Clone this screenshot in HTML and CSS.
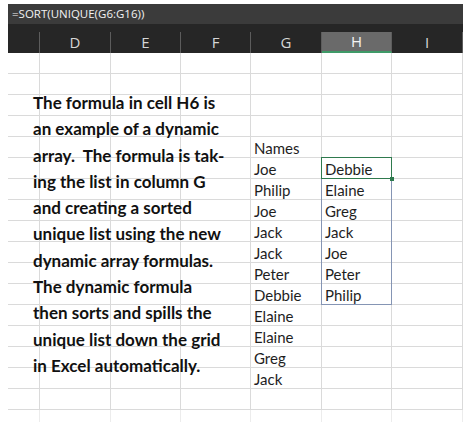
FILE: index.html
```html
<!DOCTYPE html>
<html lang="en">
<head>
<meta charset="utf-8">
<title>SORT(UNIQUE()) dynamic array</title>
<link rel="stylesheet" href="styles.css">
</head>
<body>
<div class="app">
  <div class="formula-bar">=SORT(UNIQUE(G6:G16))</div>
  <div class="col-headers">
    <div class="hcell corner"></div>
    <div class="hcell w71">D</div>
    <div class="hcell w70">E</div>
    <div class="hcell w70">F</div>
    <div class="hcell w71">G</div>
    <div class="hcell w70 selected">H</div>
    <div class="hcell w71">I</div>
  </div>
  <div class="sheet">
    <div class="row"><div class="cell rh"></div><div class="cell w71"></div><div class="cell w70"></div><div class="cell w70"></div><div class="cell w71"></div><div class="cell w70"></div><div class="cell w71"></div></div>
    <div class="row"><div class="cell rh"></div><div class="cell w71"></div><div class="cell w70"></div><div class="cell w70"></div><div class="cell w71"></div><div class="cell w70"></div><div class="cell w71"></div></div>
    <div class="row"><div class="cell rh"></div><div class="cell w71"></div><div class="cell w70"></div><div class="cell w70"></div><div class="cell w71"></div><div class="cell w70"></div><div class="cell w71"></div></div>
    <div class="row"><div class="cell rh"></div><div class="cell w71"></div><div class="cell w70"></div><div class="cell w70"></div><div class="cell w71"></div><div class="cell w70"></div><div class="cell w71"></div></div>
    <div class="row"><div class="cell rh"></div><div class="cell w71"></div><div class="cell w70"></div><div class="cell w70"></div><div class="cell w71">Names</div><div class="cell w70"></div><div class="cell w71"></div></div>
    <div class="row"><div class="cell rh"></div><div class="cell w71"></div><div class="cell w70"></div><div class="cell w70"></div><div class="cell w71">Joe</div><div class="cell w70">Debbie</div><div class="cell w71"></div></div>
    <div class="row"><div class="cell rh"></div><div class="cell w71"></div><div class="cell w70"></div><div class="cell w70"></div><div class="cell w71">Philip</div><div class="cell w70">Elaine</div><div class="cell w71"></div></div>
    <div class="row"><div class="cell rh"></div><div class="cell w71"></div><div class="cell w70"></div><div class="cell w70"></div><div class="cell w71">Joe</div><div class="cell w70">Greg</div><div class="cell w71"></div></div>
    <div class="row"><div class="cell rh"></div><div class="cell w71"></div><div class="cell w70"></div><div class="cell w70"></div><div class="cell w71">Jack</div><div class="cell w70">Jack</div><div class="cell w71"></div></div>
    <div class="row"><div class="cell rh"></div><div class="cell w71"></div><div class="cell w70"></div><div class="cell w70"></div><div class="cell w71">Jack</div><div class="cell w70">Joe</div><div class="cell w71"></div></div>
    <div class="row"><div class="cell rh"></div><div class="cell w71"></div><div class="cell w70"></div><div class="cell w70"></div><div class="cell w71">Peter</div><div class="cell w70">Peter</div><div class="cell w71"></div></div>
    <div class="row"><div class="cell rh"></div><div class="cell w71"></div><div class="cell w70"></div><div class="cell w70"></div><div class="cell w71">Debbie</div><div class="cell w70">Philip</div><div class="cell w71"></div></div>
    <div class="row"><div class="cell rh"></div><div class="cell w71"></div><div class="cell w70"></div><div class="cell w70"></div><div class="cell w71">Elaine</div><div class="cell w70"></div><div class="cell w71"></div></div>
    <div class="row"><div class="cell rh"></div><div class="cell w71"></div><div class="cell w70"></div><div class="cell w70"></div><div class="cell w71">Elaine</div><div class="cell w70"></div><div class="cell w71"></div></div>
    <div class="row"><div class="cell rh"></div><div class="cell w71"></div><div class="cell w70"></div><div class="cell w70"></div><div class="cell w71">Greg</div><div class="cell w70"></div><div class="cell w71"></div></div>
    <div class="row"><div class="cell rh"></div><div class="cell w71"></div><div class="cell w70"></div><div class="cell w70"></div><div class="cell w71">Jack</div><div class="cell w70"></div><div class="cell w71"></div></div>
    <div class="row"><div class="cell rh"></div><div class="cell w71"></div><div class="cell w70"></div><div class="cell w70"></div><div class="cell w71"></div><div class="cell w70"></div><div class="cell w71"></div></div>
    <div class="row tail"><div class="cell rh"></div><div class="cell w71"></div><div class="cell w70"></div><div class="cell w70"></div><div class="cell w71"></div><div class="cell w70"></div><div class="cell w71"></div></div>

    <!-- spilled range H6:H12 and the active cell H6 -->
    <div class="spill-range"></div>
    <div class="active-cell"><span class="fill-handle"></span></div>

    <p class="note">
      <span>The formula in cell H6 is</span>
      <span>an example of a dynamic</span>
      <span>array.&nbsp; The formula is tak-</span>
      <span>ing the list in column G</span>
      <span>and creating a sorted</span>
      <span>unique list using the new</span>
      <span>dynamic array formulas.</span>
      <span>The dynamic formula</span>
      <span>then sorts and spills the</span>
      <span>unique list down the grid</span>
      <span>in Excel automatically.</span>
    </p>
  </div>
</div>
</body>
</html>
```
FILE: styles.css
```css
* { box-sizing: border-box; }

body {
  margin: 0;
  background: #ffffff;
  font-family: "Lato", "Open Sans", sans-serif;
}

.app {
  width: 455px;
  margin: 4px 0 0 8px;
}

/* dark formula bar */
.formula-bar {
  height: 20px;
  background: #3b3b3b;
  color: #f2f2f2;
  font-family: "Open Sans", "Noto Sans", sans-serif;
  font-size: 11.5px;
  line-height: 20px;
  padding-left: 4px;
}

/* column letters */
.col-headers {
  height: 29px;
  background: #262626;
  display: flex;
  align-items: flex-end;
}

.hcell {
  height: 21px;
  border-right: 1px solid #5c5c5c;
  color: #d6d6d6;
  font-family: "Open Sans", "Noto Sans", sans-serif;
  font-size: 15px;
  line-height: 21px;
  text-align: center;
}

.hcell.corner { width: 32px; }

.hcell.selected {
  background: #6a6a6a;
  color: #f4f4f4;
  border-bottom: 2px solid #3f9a68;
  line-height: 19px;
}

.w70 { width: 70px; }
.w71 { width: 71px; }

/* grid */
.sheet {
  position: relative;
}

.row {
  display: flex;
  height: 21px;
}

.cell {
  height: 21px;
  border-right: 1px solid #dadada;
  border-bottom: 1px solid #dadada;
  color: #1e1e1e;
  font-size: 15px;
  line-height: 20px;
  padding: 1px 0 0 3px;
  white-space: nowrap;
}

.cell.rh { width: 32px; }

.row.tail,
.row.tail .cell {
  height: 12px;
  border-bottom: none;
  border-right-color: #ececec;
}

.spill-range {
  position: absolute;
  left: 313px;
  top: 104px;
  width: 71px;
  height: 148px;
  border: 1px solid #8595b4;
}

.active-cell {
  position: absolute;
  left: 313px;
  top: 104px;
  width: 71px;
  height: 22px;
  border: 1px solid #2f7a4e;
}

.fill-handle {
  position: absolute;
  right: -3px;
  bottom: -3px;
  width: 4px;
  height: 4px;
  background: #2f7a4e;
}

.note {
  position: absolute;
  left: 25px;
  top: 37px;
  margin: 0;
  font-weight: 700;
  font-size: 17px;
  line-height: 26.3px;
  color: #111111;
}

.note span {
  display: block;
  white-space: nowrap;
}
```
